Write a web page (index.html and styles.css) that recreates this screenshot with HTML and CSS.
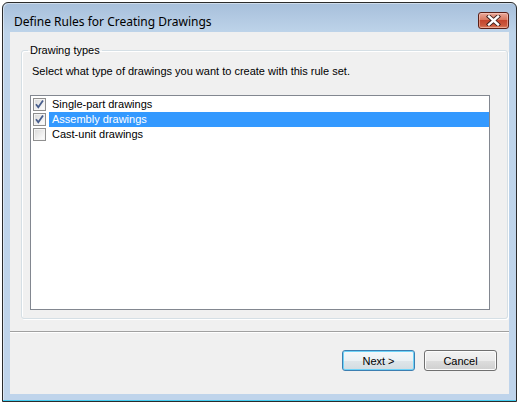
FILE: index.html
```html
<!DOCTYPE html>
<html lang="en">
<head>
    <meta charset="UTF-8">
    <title>Define Rules for Creating Drawings</title>
    <link rel="stylesheet" href="styles.css">
</head>
<body>
    <div class="window">
        <div class="titlebar">
            <span class="title">Define Rules for Creating Drawings</span>
            <button class="close-btn" aria-label="Close">
                <svg width="15" height="11" viewBox="0 0 15 11">
                    <path d="M3 1.5 L12 9.5 M12 1.5 L3 9.5" stroke="#3b1d1a" stroke-width="4.2" stroke-linecap="square" fill="none"/>
                    <path d="M3 1.5 L12 9.5 M12 1.5 L3 9.5" stroke="#ffffff" stroke-width="2.4" stroke-linecap="square" fill="none"/>
                </svg>
            </button>
        </div>

        <div class="client">
            <fieldset class="group">
                <legend>Drawing types</legend>
                <p class="prompt">Select what type of drawings you want to create with this rule set.</p>

                <div class="listbox">
                    <div class="item">
                        <span class="check checked"></span>
                        <span class="label">Single-part drawings</span>
                    </div>
                    <div class="item selected">
                        <span class="check checked"></span>
                        <span class="label">Assembly drawings</span>
                    </div>
                    <div class="item">
                        <span class="check"></span>
                        <span class="label">Cast-unit drawings</span>
                    </div>
                </div>
            </fieldset>

            <div class="separator"></div>

            <div class="buttons">
                <button class="btn default">Next &gt;</button>
                <button class="btn">Cancel</button>
            </div>
        </div>
    </div>
</body>
</html>
```

FILE: styles.css
```css
body {
    margin: 0;
    background-color: #ffffff;
    font-family: 'Liberation Sans', Arial, sans-serif;
    font-size: 11px;
    color: #000000;
}

.window {
    width: 513px;
    height: 398px;
    margin: 2px;
    border: 1px solid #2b2b2b;
    border-radius: 6px 6px 0 0;
    background: linear-gradient(to bottom, #a7bfdb 0, #bed4ea 30px, #bfd4eb 100%);
    box-shadow: inset 0 -1px 0 #46cdf0, inset 1px 1px 0 rgba(255, 255, 255, 0.45);
    display: flex;
    flex-direction: column;
}

.titlebar {
    height: 29px;
    display: flex;
    justify-content: space-between;
    align-items: flex-start;
}

.title {
    font-family: 'Noto Sans', 'Open Sans', sans-serif;
    font-size: 12px;
    line-height: 16px;
    padding: 11px 0 0 11px;
    color: #000000;
}

.close-btn {
    width: 31px;
    height: 17px;
    margin: 9px 7px 0 0;
    padding: 0;
    border: 1px solid #5a1f16;
    border-radius: 3px;
    background: linear-gradient(to bottom, #e9a99b 0, #d9785f 45%, #c4452d 50%, #cc5c40 85%, #e0896a 100%);
    box-shadow: inset 0 0 0 1px rgba(255, 220, 210, 0.45);
    display: flex;
    align-items: center;
    justify-content: center;
}

.client {
    height: 362px;
    margin: 0 7px;
    background-color: #f0f0f0;
    display: flex;
    flex-direction: column;
}

.group {
    width: 477px;
    margin: 10px 0 0 11px;
    padding: 0 0 8px 8px;
    border: 1px solid #d5dfe5;
    border-radius: 3px;
    box-shadow: inset 1px 1px 0 #ffffff, 1px 1px 0 #ffffff;
}

.group legend {
    margin-left: -2px;
    padding: 0 2px;
    line-height: 16px;
}

.prompt {
    margin: 7px 0 0 2px;
    line-height: 13px;
}

.listbox {
    width: 458px;
    height: 212px;
    margin-top: 17px;
    padding-top: 1px;
    border: 1px solid #828790;
    background-color: #ffffff;
}

.item {
    height: 15px;
    display: flex;
    align-items: center;
}

.check {
    width: 11px;
    height: 11px;
    margin: 0 3px 0 2px;
    border: 1px solid #8f8f8f;
    background: linear-gradient(135deg, #d8d8d8 0, #f4f4f4 70%, #ffffff 100%);
    box-shadow: inset 0 0 0 1px #f4f4f4;
}

.check.checked {
    background-image: url("data:image/svg+xml;utf8,<svg xmlns='http://www.w3.org/2000/svg' width='11' height='11' viewBox='0 0 11 11'><path d='M2 5.2 L4.3 8.2 L9 1.6' stroke='%23475d8c' stroke-width='1.8' fill='none'/></svg>"),
        linear-gradient(135deg, #d8d8d8 0, #f4f4f4 70%, #ffffff 100%);
}

.label {
    flex: 1;
    height: 15px;
    line-height: 15px;
    padding-left: 3px;
}

.item.selected .label {
    background-color: #3399ff;
    color: #ffffff;
}

.separator {
    margin-top: 12px;
    border-top: 1px solid #a0a0a0;
    border-bottom: 1px solid #ffffff;
}

.buttons {
    display: flex;
    justify-content: flex-end;
    gap: 9px;
    margin-top: 17px;
    padding-right: 12px;
}

.btn {
    width: 73px;
    height: 21px;
    padding: 0;
    font-family: 'Liberation Sans', Arial, sans-serif;
    font-size: 11px;
    color: #000000;
    border: 1px solid #707070;
    border-radius: 3px;
    background: linear-gradient(to bottom, #f2f2f2 0, #ebebeb 50%, #dddddd 51%, #cfcfcf 100%);
    box-shadow: inset 0 0 0 1px #fcfcfc;
}

.btn.default {
    border-color: #3c7fb1;
    box-shadow: inset 0 0 0 1px #6ed3f8;
    background: linear-gradient(to bottom, #f4f8fa 0, #ebf1f4 50%, #dfe6ea 51%, #d3dce1 100%);
}
```
